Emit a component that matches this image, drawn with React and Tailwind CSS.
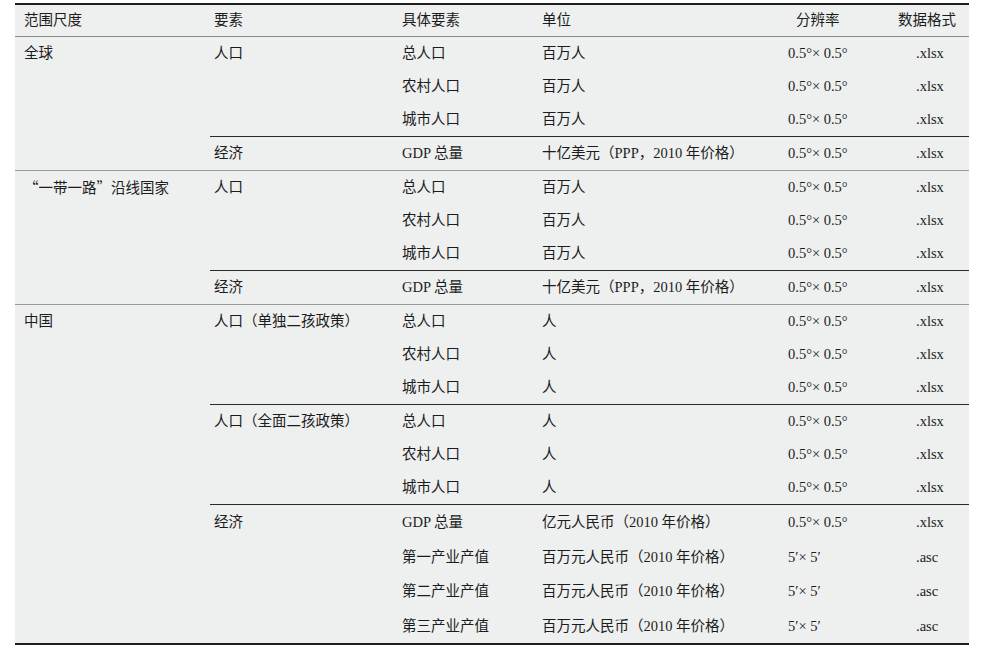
import React from "react";

const font = { fontFamily: '"Liberation Serif", "Noto Sans CJK SC", serif' };
const cjk = { fontFamily: '"Noto Sans CJK SC", sans-serif', fontFeatureSettings: '"fwid"' };

const RES = "0.5°× 0.5°";
const RES2 = "5′× 5′";

const popRows = (unit) => [
  ["总人口", unit, RES, ".xlsx"],
  ["农村人口", unit, RES, ".xlsx"],
  ["城市人口", unit, RES, ".xlsx"],
];

const sections = [
  {
    name: "全球",
    groups: [
      { name: "人口", rows: popRows("百万人") },
      { name: "经济", rows: [["GDP 总量", "十亿美元（PPP，2010 年价格）", RES, ".xlsx"]] },
    ],
  },
  {
    name: (
      <span>
        <span style={cjk}>“</span>一带一路<span style={cjk}>”</span>沿线国家
      </span>
    ),
    groups: [
      { name: "人口", rows: popRows("百万人") },
      { name: "经济", rows: [["GDP 总量", "十亿美元（PPP，2010 年价格）", RES, ".xlsx"]] },
    ],
  },
  {
    name: "中国",
    groups: [
      { name: "人口（单独二孩政策）", rows: popRows("人") },
      { name: "人口（全面二孩政策）", rows: popRows("人") },
      {
        name: "经济",
        tall: true,
        rows: [
          ["GDP 总量", "亿元人民币（2010 年价格）", RES, ".xlsx"],
          ["第一产业产值", "百万元人民币（2010 年价格）", RES2, ".asc"],
          ["第二产业产值", "百万元人民币（2010 年价格）", RES2, ".asc"],
          ["第三产业产值", "百万元人民币（2010 年价格）", RES2, ".asc"],
        ],
      },
    ],
  },
];

function Row({ r, tall }) {
  return (
    <div className={"flex items-center " + (tall ? "h-[34.5px]" : "h-[33px]")}>
      <div className="w-[140px] pl-[4px]">{r[0]}</div>
      <div className="w-[246px] pl-[4px]">{r[1]}</div>
      <div className="w-[110px] pl-[4px]">{r[2]}</div>
      <div className="flex-1 pl-[22px]">{r[3]}</div>
    </div>
  );
}

export default function App() {
  return (
    <div className="w-[1000px] h-[648px] bg-white pt-[3px] pl-[15px]" style={font}>
      <div className="w-[954px] bg-[#eeefef] border-t-2 border-b-2 border-[#1e1e1e] text-[14.5px] leading-none text-[#1c1c1c]">
        <div className="flex h-[32px] items-center border-b border-[#8a8a8a]">
          <div className="w-[195px] pl-[9px]">范围尺度</div>
          <div className="w-[188px] pl-[4px]">要素</div>
          <div className="w-[140px] pl-[4px]">具体要素</div>
          <div className="w-[258px] pl-[4px]">单位</div>
          <div className="w-[102px]">分辨率</div>
          <div className="flex-1">数据格式</div>
        </div>
        {sections.map((s, si) => (
          <div
            key={si}
            className={
              "flex " + (si < sections.length - 1 ? "border-b border-[#999999]" : "")
            }
          >
            <div className="w-[195px] pl-[9px] h-[33px] flex items-center">{s.name}</div>
            <div className="flex-1 flex flex-col">
              {s.groups.map((g, gi) => (
                <div
                  key={gi}
                  className={
                    "flex " + (gi < s.groups.length - 1 ? "border-b border-[#2a2a2a]" : "")
                  }
                >
                  <div
                    className={
                      "w-[188px] pl-[4px] flex items-center " + (g.tall ? "h-[34.5px]" : "h-[33px]")
                    }
                  >
                    {g.name}
                  </div>
                  <div className="flex-1 flex flex-col">
                    {g.rows.map((r, ri) => (
                      <Row key={ri} r={r} tall={g.tall} />
                    ))}
                  </div>
                </div>
              ))}
            </div>
          </div>
        ))}
      </div>
    </div>
  );
}
